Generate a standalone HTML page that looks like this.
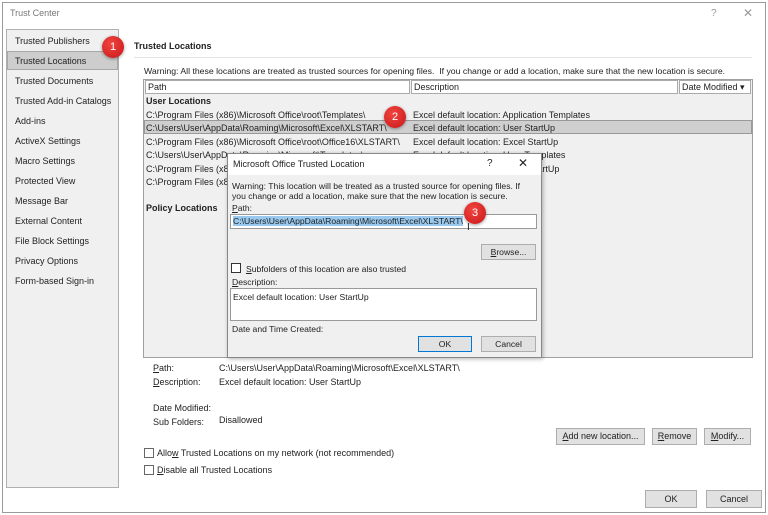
<!DOCTYPE html>
<html><head><meta charset="utf-8"><style>
*{box-sizing:border-box;margin:0;padding:0}
body{width:768px;height:515px;background:#fff;font-family:"Liberation Sans",sans-serif;font-size:9px;color:#222;position:relative;overflow:hidden}
.a{position:absolute;white-space:nowrap}
.win{position:absolute;left:2px;top:2px;width:764px;height:511px;border:1px solid #9a9a9a;background:#fff}
.btn{position:absolute;background:#e1e1e1;border:1px solid #adadad;text-align:center;line-height:15px}
.dot{position:absolute;width:22px;height:22px;border-radius:50%;background:radial-gradient(circle at 40% 35%,#f0453f,#c8161a);color:#fff;font-size:11px;text-align:center;line-height:22px;box-shadow:0 1px 3px rgba(0,0,0,.4)}
.cb{position:absolute;width:10px;height:10px;border:1px solid #333;background:#fff}
u{text-decoration:underline}
.d{font-size:8.6px}
</style></head><body>
<div class="win"></div>
<div class="a" style="left:10px;top:8px;color:#777">Trust Center</div>
<div class="a" style="left:711px;top:8px;color:#999;font-size:10px">?</div>
<div class="a" style="left:743px;top:6px;color:#999;font-size:12px">✕</div>

<div class="a" style="left:6px;top:29px;width:113px;height:459px;border:1px solid #b0b0b0;background:#f0f0f0"></div>
<div class="a" style="left:7px;top:51px;width:111px;height:19px;background:#cdcdcd;border:1px solid #a8a8a8"></div>
<div class="a" style="left:15px;top:31px;line-height:20px">Trusted Publishers<br>Trusted Locations<br>Trusted Documents<br>Trusted Add-in Catalogs<br>Add-ins<br>ActiveX Settings<br>Macro Settings<br>Protected View<br>Message Bar<br>External Content<br>File Block Settings<br>Privacy Options<br>Form-based Sign-in</div>

<div class="a" style="left:134px;top:41px;font-weight:bold">Trusted Locations</div>
<div class="a" style="left:134px;top:57px;width:618px;height:1px;background:#e3e3e3"></div>
<div class="a" style="left:144px;top:66px;font-size:8.7px">Warning: All these locations are treated as trusted sources for opening files.&nbsp; If you change or add a location, make sure that the new location is secure.</div>

<div class="a" style="left:143px;top:79px;width:610px;height:279px;border:1px solid #a0a0a0;background:#f0f0f0"></div>
<div class="a" style="left:145px;top:80px;width:265px;height:14px;background:#fff;border:1px solid #aaa;padding-left:2px;line-height:12px">Path</div>
<div class="a" style="left:411px;top:80px;width:267px;height:14px;background:#fff;border:1px solid #aaa;padding-left:2px;line-height:12px">Description</div>
<div class="a" style="left:679px;top:80px;width:72px;height:14px;background:#fff;border:1px solid #aaa;padding-left:2px;line-height:12px">Date Modified ▾</div>
<div class="a" style="left:144px;top:120px;width:608px;height:14px;background:#cfcfcf;border:1px solid #999"></div>
<div class="a" style="left:146px;top:96px;font-weight:bold">User Locations</div>
<div class="a" style="left:146px;top:109px;line-height:13.4px">C:\Program Files (x86)\Microsoft Office\root\Templates\<br>C:\Users\User\AppData\Roaming\Microsoft\Excel\XLSTART\<br>C:\Program Files (x86)\Microsoft Office\root\Office16\XLSTART\<br>C:\Users\User\AppData\Roaming\Microsoft\Templates\<br>C:\Program Files (x86)\Microsoft Office\root\Office16\STARTUP\<br>C:\Program Files (x86)\Microsoft Office\root\Office16\</div>
<div class="a" style="left:413px;top:109px;line-height:13.4px">Excel default location: Application Templates<br>Excel default location: User StartUp<br>Excel default location: Excel StartUp<br>Excel default location: User Templates<br>Excel default location: Office StartUp</div>
<div class="a" style="left:146px;top:203px;font-weight:bold">Policy Locations</div>

<div class="a" style="left:227px;top:153px;width:315px;height:205px;background:#f0f0f0;border:1px solid #888;box-shadow:1px 1px 4px rgba(0,0,0,.3)"></div>
<div class="a" style="left:228px;top:154px;width:313px;height:21px;background:#fff"></div>
<div class="a" style="left:233px;top:159px">Microsoft Office Trusted Location</div>
<div class="a" style="left:487px;top:158px;font-size:10px">?</div>
<div class="a" style="left:518px;top:156px;font-size:12px">✕</div>
<div class="a d" style="left:232px;top:182px;line-height:9.5px">Warning: This location will be treated as a trusted source for opening files. If<br>you change or add a location, make sure that the new location is secure.</div>
<div class="a d" style="left:232px;top:203px"><u>P</u>ath:</div>
<div class="a" style="left:230px;top:214px;width:307px;height:15px;background:#fff;border:1px solid #999"></div>
<div class="a d" style="left:233px;top:216px;background:#99c9ef;line-height:10px">C:\Users\User\AppData\Roaming\Microsoft\Excel\XLSTART\</div>
<div class="a" style="left:467px;top:222px;font-size:10px">I</div>
<div class="btn d" style="left:481px;top:244px;width:55px;height:16px"><u>B</u>rowse...</div>
<div class="cb" style="left:231px;top:263px"></div>
<div class="a d" style="left:246px;top:264px"><u>S</u>ubfolders of this location are also trusted</div>
<div class="a d" style="left:232px;top:277px"><u>D</u>escription:</div>
<div class="a d" style="left:230px;top:288px;width:307px;height:33px;background:#fff;border:1px solid #999;padding:3px 2px">Excel default location: User StartUp</div>
<div class="a d" style="left:232px;top:324px">Date and Time Created:</div>
<div class="btn d" style="left:418px;top:336px;width:54px;height:16px;border:1px solid #0078d7">OK</div>
<div class="btn d" style="left:481px;top:336px;width:55px;height:16px">Cancel</div>

<div class="a" style="left:153px;top:361px;line-height:14px"><u>P</u>ath:<br><u>D</u>escription:</div>
<div class="a" style="left:219px;top:361px;line-height:14px">C:\Users\User\AppData\Roaming\Microsoft\Excel\XLSTART\<br>Excel default location: User StartUp</div>
<div class="a" style="left:153px;top:401px;line-height:14px">Date Modified:<br>Sub Folders:</div>
<div class="a" style="left:219px;top:415px">Disallowed</div>
<div class="btn" style="left:556px;top:428px;width:89px;height:17px"><u>A</u>dd new location...</div>
<div class="btn" style="left:652px;top:428px;width:45px;height:17px"><u>R</u>emove</div>
<div class="btn" style="left:704px;top:428px;width:47px;height:17px"><u>M</u>odify...</div>
<div class="cb" style="left:144px;top:448px;border-color:#666"></div>
<div class="a" style="left:157px;top:448px">Allo<u>w</u> Trusted Locations on my network (not recommended)</div>
<div class="cb" style="left:144px;top:465px;border-color:#666"></div>
<div class="a" style="left:157px;top:465px"><u>D</u>isable all Trusted Locations</div>
<div class="btn" style="left:645px;top:490px;width:52px;height:18px;line-height:16px">OK</div>
<div class="btn" style="left:706px;top:490px;width:56px;height:18px;line-height:16px">Cancel</div>

<div class="dot" style="left:102px;top:36px">1</div>
<div class="dot" style="left:384px;top:106px">2</div>
<div class="dot" style="left:464px;top:202px">3</div>
</body></html>
